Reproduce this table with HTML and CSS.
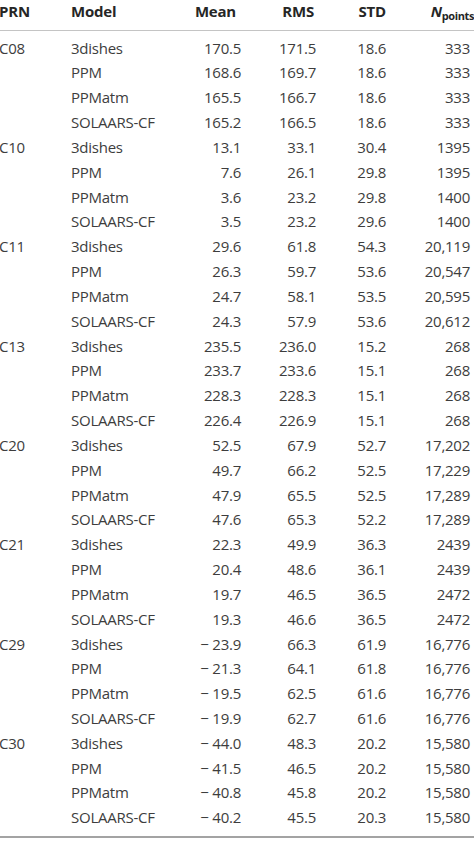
FILE: index.html
```html
<!DOCTYPE html>
<html>
<head>
<meta charset="utf-8">
<link rel="stylesheet" href="styles.css">
</head>
<body>
<div class="table">
  <div class="head row">
    <div class="c prn">PRN</div>
    <div class="c model">Model</div>
    <div class="c num mean-h">Mean</div>
    <div class="c num rms-h">RMS</div>
    <div class="c num">STD</div>
    <div class="c num npts-h"><i>N</i><sub>points</sub></div>
  </div>
  <div class="body" id="body"></div>
</div>
<script>
var data = [
 ["C08",[["3dishes","170.5","171.5","18.6","333"],["PPM","168.6","169.7","18.6","333"],["PPMatm","165.5","166.7","18.6","333"],["SOLAARS-CF","165.2","166.5","18.6","333"]]],
 ["C10",[["3dishes","13.1","33.1","30.4","1395"],["PPM","7.6","26.1","29.8","1395"],["PPMatm","3.6","23.2","29.8","1400"],["SOLAARS-CF","3.5","23.2","29.6","1400"]]],
 ["C11",[["3dishes","29.6","61.8","54.3","20,119"],["PPM","26.3","59.7","53.6","20,547"],["PPMatm","24.7","58.1","53.5","20,595"],["SOLAARS-CF","24.3","57.9","53.6","20,612"]]],
 ["C13",[["3dishes","235.5","236.0","15.2","268"],["PPM","233.7","233.6","15.1","268"],["PPMatm","228.3","228.3","15.1","268"],["SOLAARS-CF","226.4","226.9","15.1","268"]]],
 ["C20",[["3dishes","52.5","67.9","52.7","17,202"],["PPM","49.7","66.2","52.5","17,229"],["PPMatm","47.9","65.5","52.5","17,289"],["SOLAARS-CF","47.6","65.3","52.2","17,289"]]],
 ["C21",[["3dishes","22.3","49.9","36.3","2439"],["PPM","20.4","48.6","36.1","2439"],["PPMatm","19.7","46.5","36.5","2472"],["SOLAARS-CF","19.3","46.6","36.5","2472"]]],
 ["C29",[["3dishes","\u2212 23.9","66.3","61.9","16,776"],["PPM","\u2212 21.3","64.1","61.8","16,776"],["PPMatm","\u2212 19.5","62.5","61.6","16,776"],["SOLAARS-CF","\u2212 19.9","62.7","61.6","16,776"]]],
 ["C30",[["3dishes","\u2212 44.0","48.3","20.2","15,580"],["PPM","\u2212 41.5","46.5","20.2","15,580"],["PPMatm","\u2212 40.8","45.8","20.2","15,580"],["SOLAARS-CF","\u2212 40.2","45.5","20.3","15,580"]]]
];
var body = document.getElementById("body");
data.forEach(function(g){
  g[1].forEach(function(r, i){
    var row = document.createElement("div");
    row.className = "row";
    var cells = [i === 0 ? g[0] : ""].concat(r);
    var cls = ["c prn","c model","c num","c num","c num","c num"];
    cells.forEach(function(t, k){
      var d = document.createElement("div");
      d.className = cls[k];
      d.textContent = t;
      row.appendChild(d);
    });
    body.appendChild(row);
  });
});
</script>
</body>
</html>
```
FILE: styles.css
```css
html, body {
  margin: 0;
  padding: 0;
  background: #ffffff;
}
body {
  width: 474px;
  height: 841px;
  overflow: hidden;
}
.table {
  margin-left: -1px;
  width: 480px;
  font-family: "Open Sans", "Noto Sans", sans-serif;
  font-size: 15px;
  letter-spacing: -0.25px;
  color: #3d3d3d;
  border-bottom: 2px solid #a3a3a3;
}
.row {
  display: grid;
  grid-template-columns: 72px 100px 70px 75px 70px 84px;
  line-height: 24.84px;
  height: 24.84px;
  white-space: nowrap;
}
.head {
  line-height: 22px;
  height: 22px;
  padding-bottom: 8px;
  border-bottom: 1px solid #c4c4c4;
  font-weight: 700;
  color: #262626;
  letter-spacing: -0.2px;
}
.body {
  padding-top: 4.65px;
  padding-bottom: 5.5px;
}
.num {
  text-align: right;
}
.mean-h {
  padding-right: 5px;
}
.rms-h {
  padding-right: 2px;
}
.npts-h {
  margin-right: -4px;
  letter-spacing: -0.4px;
}
.npts-h i {
  font-style: italic;
}
.npts-h sub {
  font-size: 11px;
  vertical-align: -3px;
  line-height: 0;
}
```
